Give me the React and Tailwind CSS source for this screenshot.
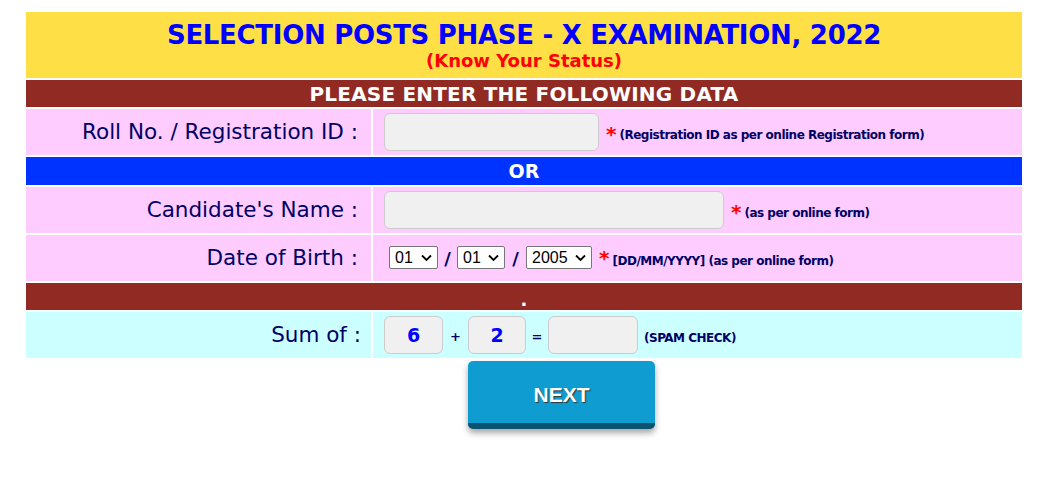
import React from "react";

const Chevron = () => (
  <svg className="pointer-events-none absolute right-[6px] top-1/2 -translate-y-1/2" width="11" height="7" viewBox="0 0 11 7">
    <path d="M1 1l4.5 4.5L10 1" fill="none" stroke="#000" strokeWidth="1.8" />
  </svg>
);

function Sel({ value, w }) {
  return (
    <div className="relative" style={{ width: w }}>
      <select
        defaultValue={value}
        className="appearance-none w-full h-[23px] border border-[#767676] bg-white pl-[5px] text-[16px] leading-[21px] text-black rounded-[2px]"
        style={{ fontFamily: "'Liberation Sans', Arial, sans-serif" }}
      >
        <option>{value}</option>
      </select>
      <Chevron />
    </div>
  );
}

const Star = () => <span className="text-[#ff0000] text-[20px] font-bold leading-none relative top-[2px] mr-[3px]">*</span>;

export default function App() {
  const f = { fontFamily: "'DejaVu Sans', Verdana, sans-serif" };
  const label = "bg-[#ffccff] flex items-center justify-end pr-[13px] text-[21.5px] text-[#000066]";
  const small = "text-[12px] font-bold text-[#000066] tracking-[-0.5px] relative top-[3px]";
  return (
    <div className="bg-white w-[1057px] h-[485px] pt-[12px] pl-[26px]" style={f}>
      <div className="w-[996px] grid grid-cols-[345px_649px] gap-[2px]">
        <div className="col-span-2 bg-[#ffdf46] h-[66px] flex flex-col items-center pt-[8px]">
          <div className="text-[26px] font-bold text-[#0000ff] leading-[30px] tracking-[-0.3px]">SELECTION POSTS PHASE - X EXAMINATION, 2022</div>
          <div className="text-[18px] font-bold text-[#ff0000] leading-[22px]">(Know Your Status)</div>
        </div>
        <div className="col-span-2 bg-[#902a23] h-[27px] flex items-center justify-center text-white font-bold text-[20px] tracking-[0.2px]">PLEASE ENTER THE FOLLOWING DATA</div>

        <div className={label + " h-[46px]"}>Roll No. / Registration ID :</div>
        <div className="bg-[#ffccff] h-[46px] flex items-center pl-[11px]">
          <input className="w-[215px] h-[38px] bg-[#f0f0f0] border border-[#cccccc] rounded-[6px] mr-[7px]" />
          <Star />
          <span className={small}>(Registration ID as per online Registration form)</span>
        </div>

        <div className="col-span-2 bg-[#0033ff] h-[28px] flex items-center justify-center text-white font-bold text-[19px]">OR</div>

        <div className={label + " h-[46px]"}>Candidate's Name :</div>
        <div className="bg-[#ffccff] h-[46px] flex items-center pl-[11px]">
          <input className="w-[340px] h-[38px] bg-[#f0f0f0] border border-[#cccccc] rounded-[6px] mr-[7px]" />
          <Star />
          <span className={small}>(as per online form)</span>
        </div>

        <div className={label + " h-[46px]"}>Date of Birth :</div>
        <div className="bg-[#ffccff] h-[46px] flex items-center pl-[16px]">
          <Sel value="01" w={49} />
          <span className="text-[18px] font-bold text-[#000066] w-[19px] text-center">/</span>
          <Sel value="01" w={48} />
          <span className="text-[18px] font-bold text-[#000066] w-[21px] text-center">/</span>
          <Sel value="2005" w={66} />
          <span className="ml-[7px]"><Star /></span>
          <span className={small}>[DD/MM/YYYY] (as per online form)</span>
        </div>

        <div className="col-span-2 bg-[#902a23] h-[27px] flex items-center justify-center text-white font-bold text-[18px] leading-none">
          <span className="relative top-[3px]">.</span>
        </div>

        <div className="bg-[#ccffff] h-[46px] flex items-center justify-end pr-[10px] text-[21.5px] text-[#000066]">Sum of :</div>
        <div className="bg-[#ccffff] h-[46px] flex items-center pl-[11px]">
          <div className="w-[59px] h-[38px] bg-[#f0f0f0] border border-[#cccccc] rounded-[6px] flex items-center justify-center text-[19px] font-bold text-[#0000ff]">6</div>
          <span className="w-[25px] text-center text-[13px] font-bold text-[#000066] relative top-[2px]">+</span>
          <div className="w-[58px] h-[38px] bg-[#f0f0f0] border border-[#cccccc] rounded-[6px] flex items-center justify-center text-[19px] font-bold text-[#0000ff]">2</div>
          <span className="w-[22px] text-center text-[13px] font-bold text-[#000066] relative top-[2px]">=</span>
          <input className="w-[90px] h-[38px] bg-[#f0f0f0] border border-[#cccccc] rounded-[6px] mr-[6px]" />
          <span className={small}>(SPAM CHECK)</span>
        </div>
      </div>

      <div className="w-[996px] flex mt-[3px] pl-[442px]">
        <button
          className="w-[187px] h-[68px] pt-[5px] rounded-[5px] bg-[#0f9dd1] border-b-[6px] border-[#0b5370] text-white font-bold text-[21px] shadow-[0_4px_6px_rgba(0,0,0,0.35)] [text-shadow:1px_1px_1px_#333]"
          style={{ fontFamily: "'Liberation Sans', Arial, sans-serif" }}
        >
          NEXT
        </button>
      </div>
    </div>
  );
}
